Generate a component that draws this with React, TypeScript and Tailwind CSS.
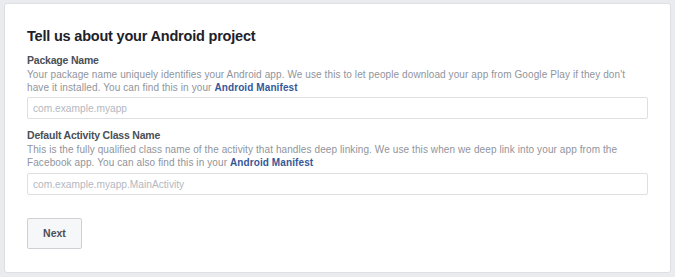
export default function App() {
    return (
        <main className="w-[675px] h-[277px] bg-[#e9ebee] pt-[3px] px-[4px]" style={{ fontFamily: '"Liberation Sans", Arial, sans-serif' }}>
            <div className="h-[270px] bg-white border border-[#dddfe2] rounded-[3px] pl-[22px] pr-[22px] pt-[23px]">
                <h1 className="text-[14.5px] tracking-[-0.2px] font-bold text-[#1d2129] leading-[18px] mb-[8px]">Tell us about your Android project</h1>

                <label className="block text-[10.5px] tracking-[-0.2px] font-bold text-[#4b4f56] leading-[14px] mb-[1px]">Package Name</label>
                <p className="text-[10px] tracking-[0.1px] text-[#90949c] leading-[13px] mb-[3px]">
                    Your package name uniquely identifies your Android app. We use this to let people download your app from Google Play if they don't have it installed. You can find this in your <span className="font-bold text-[#365899]">Android Manifest</span>
                </p>
                <input
                    type="text"
                    placeholder="com.example.myapp"
                    className="block w-[621px] h-[22px] border border-[#dddfe2] rounded-[2px] px-[5px] text-[10.2px] placeholder:text-[#b4b8bf] outline-none"
                />

                <label className="block text-[10.5px] tracking-[-0.2px] font-bold text-[#4b4f56] leading-[14px] mt-[9px] mb-[1px]">Default Activity Class Name</label>
                <p className="text-[10px] tracking-[0.1px] text-[#90949c] leading-[13px] mb-[4px]">
                    This is the fully qualified class name of the activity that handles deep linking. We use this when we deep link into your app from the Facebook app. You can also find this in your <span className="font-bold text-[#365899]">Android Manifest</span>
                </p>
                <input
                    type="text"
                    placeholder="com.example.myapp.MainActivity"
                    className="block w-[621px] h-[22px] border border-[#dddfe2] rounded-[2px] px-[5px] text-[10.2px] placeholder:text-[#b4b8bf] outline-none"
                />

                <button className="mt-[23px] w-[55px] h-[31px] bg-[#f6f7f9] border border-[#ced0d4] rounded-[2px] text-[10.5px] font-bold text-[#4b4f56]">
                    Next
                </button>
            </div>
        </main>
    );
}
